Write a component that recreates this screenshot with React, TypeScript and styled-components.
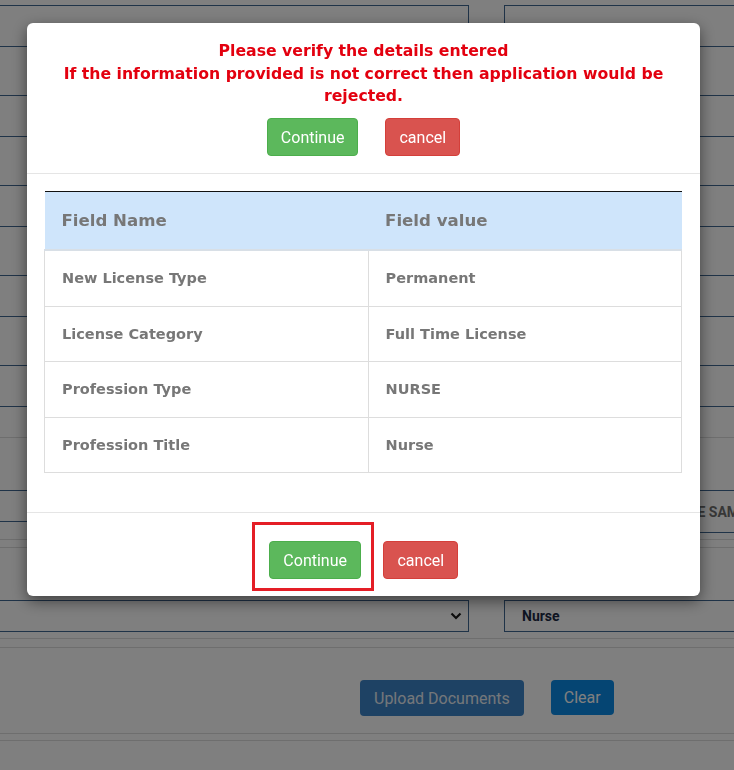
import React from 'react'
import styled, { createGlobalStyle } from 'styled-components'

const GlobalStyle = createGlobalStyle`
  html, body {
    margin: 0;
    padding: 0;
    background: #ffffff;
    overflow: hidden;
    font-family: Roboto, "Liberation Sans", sans-serif;
  }
`

const rows = [
  { name: 'New License Type', value: 'Permanent' },
  { name: 'License Category', value: 'Full Time License' },
  { name: 'Profession Type', value: 'NURSE' },
  { name: 'Profession Title', value: 'Nurse' },
]

const App = () => {
  return (
    <Page>
      <GlobalStyle />
      <Form>
        <FieldGrid>
          {[0, 1, 2, 3, 4].map(i => (
            <React.Fragment key={i}>
              <TextBox />
              <TextBox />
            </React.Fragment>
          ))}
        </FieldGrid>
        <Rule $top={30} />
        <FieldGrid $top={52}>
          <TextBox $h={32} />
          <TextBox $h={43}>
            <BoxText $pad={6}>PERMANENT ADDRESS IS THE SAME</BoxText>
          </TextBox>
        </FieldGrid>
        <Rule $top={6} />
        <Rule $top={7} />
        <FieldGrid $top={52}>
          <SelectBox>
            <svg width="12" height="8" viewBox="0 0 12 8">
              <path d="M1.5 1.5 L6 6 L10.5 1.5" fill="none" stroke="#1a1a1a" strokeWidth="2.2" />
            </svg>
          </SelectBox>
          <TextBox $h={32}>
            <BoxText $pad={17}>Nurse</BoxText>
          </TextBox>
        </FieldGrid>
        <Rule $top={6} />
        <Rule $top={8} />
        <ActionBar>
          <UploadButton>Upload Documents</UploadButton>
          <ClearButton>Clear</ClearButton>
        </ActionBar>
        <Rule $top={17} />
        <Rule $top={6} />
      </Form>

      <Backdrop />

      <Modal>
        <ModalHeader>
          <Warning>
            Please verify the details entered
            <br />
            If the information provided is not correct then application would be rejected.
          </Warning>
          <ButtonRow $gap={27}>
            <Btn $variant="success">Continue</Btn>
            <Btn $variant="danger">cancel</Btn>
          </ButtonRow>
        </ModalHeader>

        <ModalBody>
          <DetailTable>
            <thead>
              <tr>
                <HeadCell style={{ width: '50.8%' }}>Field Name</HeadCell>
                <HeadCell>Field value</HeadCell>
              </tr>
            </thead>
            <tbody>
              {rows.map(r => (
                <tr key={r.name}>
                  <Cell>{r.name}</Cell>
                  <Cell>{r.value}</Cell>
                </tr>
              ))}
            </tbody>
          </DetailTable>
        </ModalBody>

        <ModalFooter>
          <ButtonRow $gap={22}>
            <Highlight>
              <Btn $variant="success" $wide>Continue</Btn>
            </Highlight>
            <Btn $variant="danger">cancel</Btn>
          </ButtonRow>
        </ModalFooter>
      </Modal>
    </Page>
  )
}

const Page = styled.div`
  position: relative;
  width: 734px;
  height: 770px;
  overflow: hidden;
  background: #ffffff;
`

const Form = styled.div`
  display: flex;
  flex-direction: column;
  padding-top: 5px;
`

const FieldGrid = styled.div<{ $top?: number }>`
  display: grid;
  grid-template-columns: 490px 300px;
  column-gap: 35px;
  row-gap: 48px;
  align-items: start;
  margin-left: -21px;
  margin-top: ${p => p.$top ?? 0}px;
`

const TextBox = styled.div<{ $h?: number }>`
  box-sizing: border-box;
  height: ${p => p.$h ?? 42}px;
  border: 1px solid #3f6690;
  display: flex;
  align-items: center;
`

const SelectBox = styled(TextBox).attrs({ $h: 32 })`
  justify-content: flex-end;
  padding-right: 6px;
`

const BoxText = styled.span<{ $pad: number }>`
  padding-left: ${p => p.$pad}px;
  font-family: Roboto, "Liberation Sans", sans-serif;
  font-weight: 700;
  font-size: 14px;
  color: ${p => (p.$pad === 17 ? '#1c2a45' : '#6e6e6e')};
  white-space: nowrap;
`

const Rule = styled.div<{ $top: number }>`
  height: 1px;
  background: #dcdcdc;
  margin-top: ${p => p.$top}px;
`

const ActionBar = styled.div`
  display: flex;
  gap: 27px;
  padding-left: 360px;
  margin-top: 32px;
`

const FormButton = styled.button`
  height: 36px;
  border: none;
  border-radius: 4px;
  font-family: Roboto, "Liberation Sans", sans-serif;
  font-size: 16px;
  color: #ffffff;
  padding: 0 14px;
`

const UploadButton = styled(FormButton)`
  background: #3c84c8;
  color: #e8eef5;
`

const ClearButton = styled(FormButton)`
  background: #0a8ae6;
  padding: 0 13px;
  height: 35px;
`

const Backdrop = styled.div`
  position: fixed;
  inset: 0;
  background: rgba(0, 0, 0, 0.5);
`

const Modal = styled.div`
  position: fixed;
  top: 23px;
  left: 27px;
  width: 673px;
  background: #ffffff;
  border-radius: 6px;
  box-shadow: 0 5px 15px rgba(0, 0, 0, 0.5);
  display: flex;
  flex-direction: column;
`

const ModalHeader = styled.div`
  padding: 17px 15px 17px;
  border-bottom: 1px solid #e5e5e5;
  display: flex;
  flex-direction: column;
  align-items: center;
`

const Warning = styled.div`
  font-family: "DejaVu Sans", Verdana, sans-serif;
  font-weight: 700;
  font-size: 15.7px;
  line-height: 22.5px;
  color: #e3000f;
  text-align: center;
`

const ButtonRow = styled.div<{ $gap: number }>`
  display: flex;
  justify-content: center;
  gap: ${p => p.$gap}px;
  margin-top: 10.5px;
`

const Btn = styled.button<{ $variant: 'success' | 'danger'; $wide?: boolean }>`
  height: 38px;
  padding: 0 ${p => (p.$wide ? 13.5 : 13)}px;
  border-radius: 4px;
  font-family: Roboto, "Liberation Sans", sans-serif;
  font-size: 16px;
  color: #ffffff;
  background: ${p => (p.$variant === 'success' ? '#5cb85c' : '#d9534f')};
  border: 1px solid ${p => (p.$variant === 'success' ? '#4cae4c' : '#d43f3a')};
`

const Highlight = styled.span`
  position: relative;
  display: inline-flex;

  &::after {
    content: '';
    position: absolute;
    top: -19px;
    left: -17px;
    right: -13px;
    bottom: -12px;
    border: 3px solid #e41e26;
    pointer-events: none;
  }
`

const ModalBody = styled.div`
  padding: 17px 18px 39px 17px;
  border-bottom: 1px solid #e5e5e5;
`

const DetailTable = styled.table`
  width: 100%;
  border-collapse: collapse;
  font-family: "DejaVu Sans", Verdana, sans-serif;
  font-weight: 700;
  color: #777777;
`

const HeadCell = styled.th`
  height: 57px;
  padding: 0 17px;
  text-align: left;
  font-size: 16.6px;
  background: #cfe5fb;
  border-top: 1px solid #111111;
  border-bottom: 2px solid #d8dfe6;
`

const Cell = styled.td`
  height: 54.5px;
  padding: 0 17px;
  font-size: 14.5px;
  border: 1px solid #dddddd;
`

const ModalFooter = styled.div`
  padding: 17px 15px 17px;

  & > div {
    margin-top: 11px;
  }
`

export default App
